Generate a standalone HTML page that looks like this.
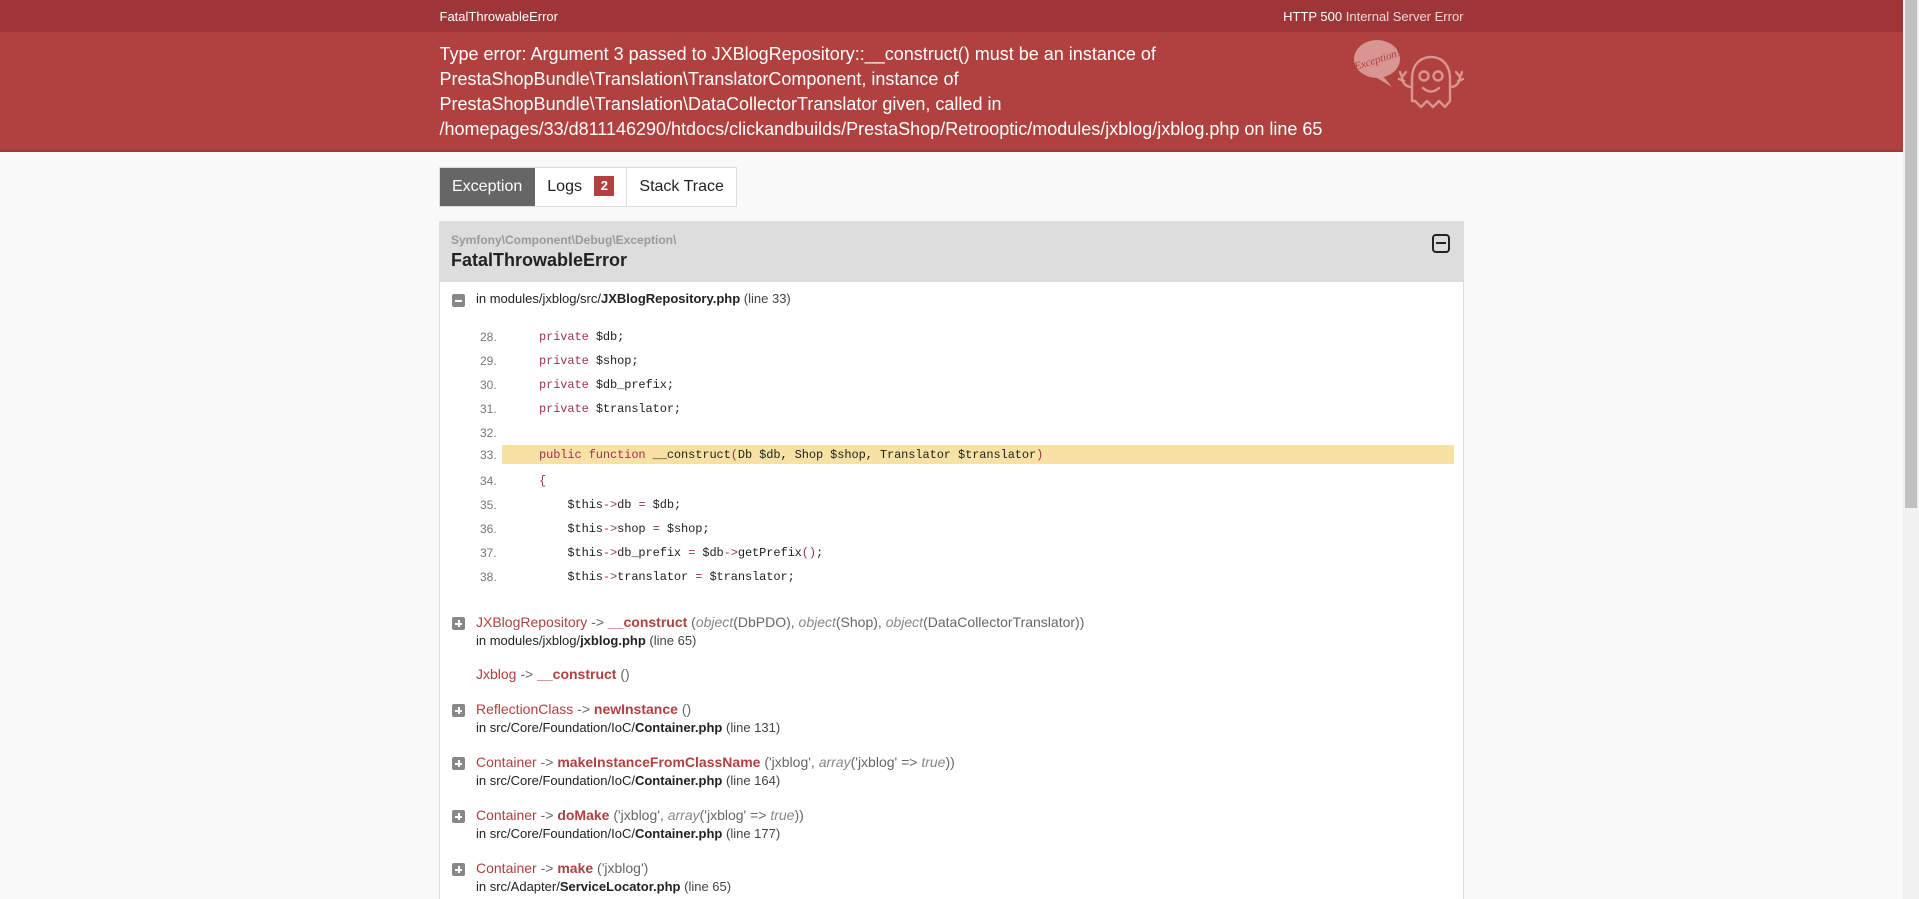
<!DOCTYPE html>
<html><head><meta charset="utf-8"><style>
*{box-sizing:border-box;margin:0;padding:0}
html,body{width:1919px;height:899px;overflow:hidden}
body{background:#F9F9F9;font-family:"Liberation Sans",Arial,sans-serif;color:#222;font-size:14px;position:relative}
.page{width:1903px}
.top{background:#9E3638;height:32px;color:#fff}
.wrap{width:1024px;margin:0 auto;position:relative}
.top .wrap{display:flex;justify-content:space-between;align-items:center;height:32px;font-size:13px}
.top .r{color:rgba(255,255,255,.8)}
.top .r b{color:#fff;font-weight:normal}
.hdr{background:#B0413E;height:120px;border-bottom:2px solid #9A3A37;color:#fff}
.msg{font-size:18px;line-height:25px;padding-top:10px;width:900px;word-wrap:break-word}
.ghost{position:absolute;right:0;top:7px}
.tabs{position:absolute;top:167px;left:439px;display:flex;height:40px;border:1px solid #ddd;background:#fff}
.tabs div{padding:0 12px;line-height:38px;font-size:16px;color:#222;border-right:1px solid #ddd}
.tabs .act{background:#666;color:#fff;border-color:#666}
.badge{display:inline-block;background:#B0413E;color:#fff;font-weight:bold;font-size:13px;line-height:20px;width:20px;text-align:center;margin-left:8px;position:relative;top:-1px}
.panel{position:absolute;top:221px;left:439px;width:1025px;height:700px;background:#fff;border:1px solid #ddd}
.ph{background:#ddd;height:60px;padding:10px 11px;position:relative}
.ns{font-size:12px;font-weight:bold;color:#999;line-height:16px}
.cls{font-size:18px;font-weight:bold;color:#222;line-height:24px}
.tog{position:absolute;left:992px;top:12px;width:18px;height:19px;border:2px solid #222;border-radius:4px}
.tog:after{content:"";position:absolute;left:2px;right:2px;top:6px;height:2px;background:#222}
.ic{position:absolute;left:12px;width:13px;height:13px;background:#888;border-radius:2px}
.ic:after{content:"";position:absolute;left:3px;right:3px;top:5.5px;height:2px;background:#fff}
.ic.p:before{content:"";position:absolute;top:3px;bottom:3px;left:5.5px;width:2px;background:#fff}
.t{position:absolute;left:36px;font-size:13px;line-height:18px;white-space:nowrap;color:#222}
.t .l1{font-size:14px}
.t .c{color:#B0413E}.t .f{color:#B0413E;font-weight:bold}.t .a{color:#666}.t i{color:#888}
.t .g{color:#444}
.ln{position:absolute;left:40px;color:#777;font-family:"Liberation Sans",sans-serif;font-size:12px;line-height:18px}
.cd{position:absolute;left:99px;line-height:18px;white-space:pre;color:#222;font-family:"Liberation Mono",monospace;font-size:12px;letter-spacing:-0.1px}
.k{color:#A0305A}
.hl{position:absolute;left:62px;width:952px;height:19px;background:#F7E2A4}
.sb{position:absolute;left:1903px;top:0;width:16px;height:899px;background:#f1f1f1}
.sb div{position:absolute;left:2px;width:12px;top:0;height:508px;background:#c1c1c1}
</style></head><body><div class="page">
<div class="top"><div class="wrap"><span>FatalThrowableError</span><span class="r"><b>HTTP 500</b> Internal Server Error</span></div></div>
<div class="hdr"><div class="wrap">
<div class="msg">Type error: Argument 3 passed to JXBlogRepository::__construct() must be an instance of PrestaShopBundle\Translation\TranslatorComponent, instance of PrestaShopBundle\Translation\DataCollectorTranslator given, called in /homepages/33/d811146290/htdocs/clickandbuilds/PrestaShop/Retrooptic/modules/jxblog/jxblog.php on line 65</div>
<svg class="ghost" width="112" height="72" viewBox="0 0 112 72">
<g fill="none" stroke="#D99592" stroke-width="2.4" stroke-linecap="round" stroke-linejoin="round">
<path d="M60 40 C60 24 70 18 79 18 C88 18 98 24 98 40 L98 62 L93 68 L87 62 L81 68 L75 62 L69 68 L63 62 L60 62 Z"/>
<circle cx="72" cy="37" r="4.5"/><circle cx="86" cy="37" r="4.5"/>
<path d="M71 49 Q79 56 87 49"/>
<path d="M60 48 C54 48 50 44 50 38 L48 33 M50 38 L54 33 M52 42 L47 40"/>
<path d="M98 48 C104 48 108 44 108 38 L110 33 M108 38 L104 33 M106 42 L111 40"/>
</g>
<ellipse cx="25" cy="20" rx="23" ry="19" fill="#D99592"/>
<path d="M30 36 L40 48 L20 36 Z" fill="#D99592"/>
<text x="25" y="24" font-family="Liberation Serif,serif" font-style="italic" font-size="11" fill="#B0413E" text-anchor="middle" transform="rotate(-18 25 20)">Exception!</text>
</svg>
</div></div>
<div class="tabs"><div class="act">Exception</div><div>Logs <span class="badge">2</span></div><div style="border-right:0">Stack Trace</div></div>
<div class="panel">
<div class="ph"><div class="ns">Symfony\Component\Debug\Exception\</div><div class="cls">FatalThrowableError</div><div class="tog"></div></div>
<div class="ic" style="top:72px"></div>
<div class="t" style="top:68px">in modules/jxblog/src/<b>JXBlogRepository.php</b> <span class="g">(line 33)</span></div>
<div class="hl" style="top:223px"></div>
<div class="ln" style="top:106px">28.</div><div class="cd" style="top:106px"><span class="k">private</span> $db;</div>
<div class="ln" style="top:130px">29.</div><div class="cd" style="top:130px"><span class="k">private</span> $shop;</div>
<div class="ln" style="top:154px">30.</div><div class="cd" style="top:154px"><span class="k">private</span> $db_prefix;</div>
<div class="ln" style="top:178px">31.</div><div class="cd" style="top:178px"><span class="k">private</span> $translator;</div>
<div class="ln" style="top:202px">32.</div>
<div class="ln" style="top:224px">33.</div><div class="cd" style="top:224px"><span class="k">public function</span> __construct<span class="k">(</span>Db $db, Shop $shop, Translator $translator<span class="k">)</span></div>
<div class="ln" style="top:250px">34.</div><div class="cd" style="top:250px"><span class="k">{</span></div>
<div class="ln" style="top:274px">35.</div><div class="cd" style="top:274px">    $this<span class="k">-&gt;</span>db <span class="k">=</span> $db;</div>
<div class="ln" style="top:298px">36.</div><div class="cd" style="top:298px">    $this<span class="k">-&gt;</span>shop <span class="k">=</span> $shop;</div>
<div class="ln" style="top:322px">37.</div><div class="cd" style="top:322px">    $this<span class="k">-&gt;</span>db_prefix <span class="k">=</span> $db<span class="k">-&gt;</span>getPrefix<span class="k">()</span>;</div>
<div class="ln" style="top:346px">38.</div><div class="cd" style="top:346px">    $this<span class="k">-&gt;</span>translator <span class="k">=</span> $translator;</div>

<div class="ic p" style="top:395px"></div>
<div class="t" style="top:391px"><span class="l1"><span class="c">JXBlogRepository</span> <span class="a">-&gt;</span> <span class="f">__construct</span> <span class="a">(<i>object</i>(DbPDO), <i>object</i>(Shop), <i>object</i>(DataCollectorTranslator))</span></span><br>in modules/jxblog/<b>jxblog.php</b> <span class="g">(line 65)</span></div>
<div class="t" style="top:443px"><span class="l1"><span class="c">Jxblog</span> <span class="a">-&gt;</span> <span class="f">__construct</span> <span class="a">()</span></span></div>
<div class="ic p" style="top:482px"></div>
<div class="t" style="top:478px"><span class="l1"><span class="c">ReflectionClass</span> <span class="a">-&gt;</span> <span class="f">newInstance</span> <span class="a">()</span></span><br>in src/Core/Foundation/IoC/<b>Container.php</b> <span class="g">(line 131)</span></div>
<div class="ic p" style="top:535px"></div>
<div class="t" style="top:531px"><span class="l1"><span class="c">Container</span> <span class="a">-&gt;</span> <span class="f">makeInstanceFromClassName</span> <span class="a">('jxblog', <i>array</i>('jxblog' =&gt; <i>true</i>))</span></span><br>in src/Core/Foundation/IoC/<b>Container.php</b> <span class="g">(line 164)</span></div>
<div class="ic p" style="top:588px"></div>
<div class="t" style="top:584px"><span class="l1"><span class="c">Container</span> <span class="a">-&gt;</span> <span class="f">doMake</span> <span class="a">('jxblog', <i>array</i>('jxblog' =&gt; <i>true</i>))</span></span><br>in src/Core/Foundation/IoC/<b>Container.php</b> <span class="g">(line 177)</span></div>
<div class="ic p" style="top:641px"></div>
<div class="t" style="top:637px"><span class="l1"><span class="c">Container</span> <span class="a">-&gt;</span> <span class="f">make</span> <span class="a">('jxblog')</span></span><br>in src/Adapter/<b>ServiceLocator.php</b> <span class="g">(line 65)</span></div>
</div>
</div>
<div class="sb"><div></div></div>
</body></html>
